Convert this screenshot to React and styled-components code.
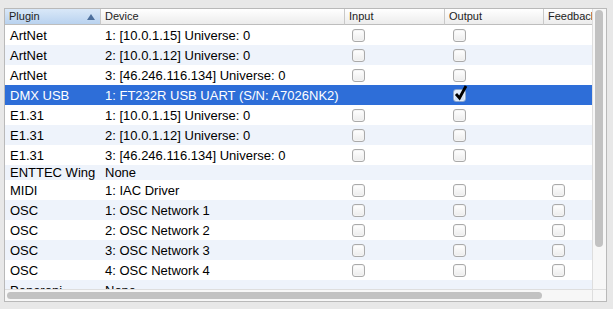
import React from 'react';
import styled, { createGlobalStyle } from 'styled-components';

const GlobalStyle = createGlobalStyle`
  html, body {
    margin: 0;
    padding: 0;
    background: #e8e8e8;
    font-family: "Liberation Sans", Arial, sans-serif;
  }
`

const Page = styled.div`
  width: 613px;
  height: 309px;
  padding: 8px 6px 9px 4px;
  box-sizing: border-box;
`

const Frame = styled.div`
  height: 292px;
  border: 1px solid #b9b9b9;
  background: #fff;
  display: grid;
  grid-template-columns: 1fr 14px;
  grid-template-rows: 1fr 12px;
  overflow: hidden;
`

const TableArea = styled.div`
  overflow: hidden;
`

const Grid = styled.div`
  display: grid;
  grid-template-columns: 95px 244px 100px 99px 100px;
  width: 638px;
`

const HeaderCell = styled.div`
  height: 16px;
  box-sizing: border-box;
  border-bottom: 1px solid #bdbdbd;
  border-left: ${p => p.$first ? 'none' : '1px solid #c9c9c9'};
  background: ${p => p.$sorted
    ? 'linear-gradient(#d9e8f8, #b9d2ef)'
    : 'linear-gradient(#ffffff, #ececec)'};
  font-size: 11px;
  color: #222;
  padding: 0 4px;
  line-height: 15px;
  display: flex;
  align-items: center;
  justify-content: space-between;
  white-space: nowrap;
  overflow: hidden;
`

const SortArrow = styled.span`
  width: 0;
  height: 0;
  border-left: 4px solid transparent;
  border-right: 4px solid transparent;
  border-bottom: 6px solid #4d6f9c;
  margin-right: 1px;
`

const Row = styled.div`
  display: contents;
`

const Cell = styled.div`
  height: ${p => p.$short ? 15 : 20}px;
  background: ${p => p.$selected ? '#2e6ed8' : p.$alt ? '#eef3fb' : '#fff'};
  color: ${p => p.$selected ? '#fff' : '#000'};
  font-size: 13px;
  padding-left: ${p => p.$check ? 0 : 5}px;
  display: flex;
  align-items: center;
  white-space: nowrap;
  overflow: hidden;
  box-sizing: border-box;
  line-height: 15px;
`

const Box = styled.span`
  position: relative;
  width: 11px;
  height: 11px;
  margin-left: ${p => p.$offset}px;
  border: 1px solid ${p => p.$on ? '#8fa9cf' : '#aaa'};
  border-radius: 3px;
  background: ${p => p.$on ? 'linear-gradient(#eaf2fd, #c9dcf6)' : 'linear-gradient(#ffffff, #ececec)'};
  box-shadow: inset 0 0 0 1px ${p => p.$on ? '#e4eefb' : '#f4f4f4'};
`

const Tick = styled.svg`
  position: absolute;
  left: 0px;
  top: -5px;
`

const VScroll = styled.div`
  border-left: 1px solid #dedede;
  background: #f7f7f7;
  padding: 1px 2px 0 2px;
`

const VThumb = styled.div`
  width: 8px;
  height: 237px;
  border-radius: 4px;
  background: #c2c2c2;
`

const HScroll = styled.div`
  border-top: 1px solid #dedede;
  background: #f7f7f7;
  padding: 2px 0 0 2px;
`

const HThumb = styled.div`
  width: 535px;
  height: 7px;
  border-radius: 4px;
  background: #c2c2c2;
`

const Corner = styled.div`
  border-top: 1px solid #dedede;
  border-left: 1px solid #dedede;
  background: #f7f7f7;
`

const rows = [
  { plugin: 'ArtNet', device: '1: [10.0.1.15] Universe: 0', io: [1, 1, 0] },
  { plugin: 'ArtNet', device: '2: [10.0.1.12] Universe: 0', io: [1, 1, 0] },
  { plugin: 'ArtNet', device: '3: [46.246.116.134] Universe: 0', io: [1, 1, 0] },
  { plugin: 'DMX USB', device: '1: FT232R USB UART (S/N: A7026NK2)', io: [0, 2, 0], selected: true },
  { plugin: 'E1.31', device: '1: [10.0.1.15] Universe: 0', io: [1, 1, 0] },
  { plugin: 'E1.31', device: '2: [10.0.1.12] Universe: 0', io: [1, 1, 0] },
  { plugin: 'E1.31', device: '3: [46.246.116.134] Universe: 0', io: [1, 1, 0] },
  { plugin: 'ENTTEC Wing', device: 'None', io: [0, 0, 0], short: true },
  { plugin: 'MIDI', device: '1: IAC Driver', io: [1, 1, 1] },
  { plugin: 'OSC', device: '1: OSC Network 1', io: [1, 1, 1] },
  { plugin: 'OSC', device: '2: OSC Network 2', io: [1, 1, 1] },
  { plugin: 'OSC', device: '3: OSC Network 3', io: [1, 1, 1] },
  { plugin: 'OSC', device: '4: OSC Network 4', io: [1, 1, 1] },
  { plugin: 'Peperoni', device: 'None', io: [0, 0, 0] },
]

const offsets = [8, 9, 9]

function CheckBox({ state, offset }) {
  if (!state) return null
  return (
    <Box $offset={offset} $on={state === 2}>
      {state === 2 && (
        <Tick width="14" height="16" viewBox="0 0 14 16">
          <path d="M2 9 L5.5 13 L12 1" fill="none" stroke="#000" strokeWidth="2.8" strokeLinejoin="miter" />
        </Tick>
      )}
    </Box>
  )
}

export default function App() {
  return (
    <>
      <GlobalStyle />
      <Page>
        <Frame>
          <TableArea>
            <Grid>
              <HeaderCell $first $sorted>Plugin<SortArrow /></HeaderCell>
              <HeaderCell>Device</HeaderCell>
              <HeaderCell>Input</HeaderCell>
              <HeaderCell>Output</HeaderCell>
              <HeaderCell>Feedback</HeaderCell>
              {rows.map((r, i) => {
                const common = { $alt: i % 2 === 1, $selected: r.selected, $short: r.short }
                return (
                  <Row key={i}>
                    <Cell {...common}>{r.plugin}</Cell>
                    <Cell {...common}>{r.device}</Cell>
                    {r.io.map((s, j) => (
                      <Cell key={j} {...common} $check>
                        <CheckBox state={s} offset={offsets[j]} />
                      </Cell>
                    ))}
                  </Row>
                )
              })}
            </Grid>
          </TableArea>
          <VScroll><VThumb /></VScroll>
          <HScroll><HThumb /></HScroll>
          <Corner />
        </Frame>
      </Page>
    </>
  )
}
